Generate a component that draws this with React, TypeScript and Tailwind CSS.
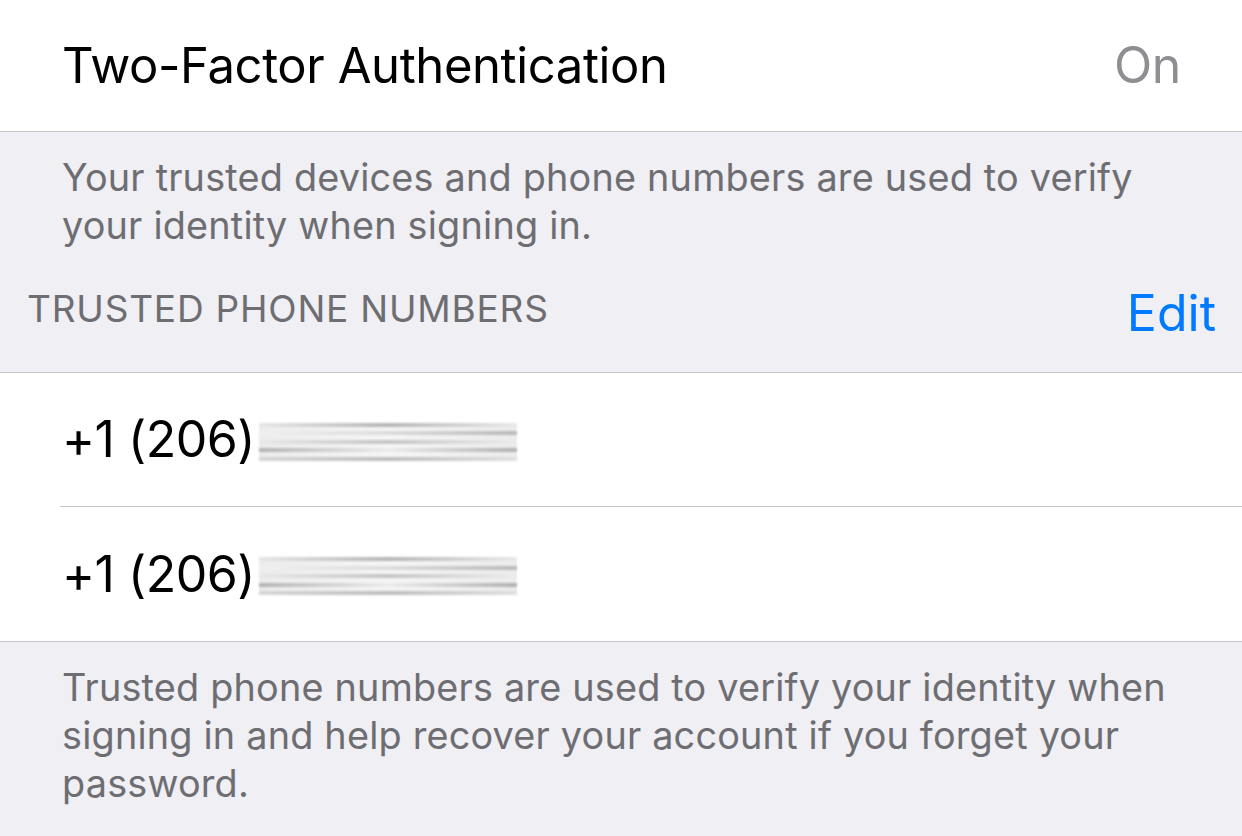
import React from "react";

const Redacted: React.FC = () => (
  <div className="ml-[4px] mt-[4px] flex h-[38px] w-[258px] flex-col justify-between bg-gradient-to-r from-[#ececec] via-[#f6f6f6] to-[#ececec] blur-[1px]">
    <div className="h-[4px] bg-gradient-to-r from-[#e6e6e6] via-[#b5b5b5] to-[#e9e9e9]" />
    <div className="h-[4px] bg-gradient-to-r from-[#f0f0f0] via-[#dcdcdc] to-[#b9b9b9]" />
    <div className="h-[4px] bg-gradient-to-r from-[#e8e8e8] via-[#c4c4c4] to-[#ececec]" />
    <div className="h-[4px] bg-gradient-to-r from-[#b3b3b3] via-[#ececec] to-[#b0b0b0]" />
    <div className="h-[4px] bg-gradient-to-r from-[#d6d6d6] via-[#bdbdbd] to-[#e0e0e0]" />
  </div>
);

const PhoneRow: React.FC<{ last?: boolean }> = ({ last }) => (
  <div className="pl-[60px]">
    <div className={`flex h-[134px] items-center ${last ? "" : "border-b border-[#c8c7cc]"}`}>
      <span className="pl-[2px] text-[50px] tracking-[-0.5px] text-black">+1 (206)</span>
      <Redacted />
    </div>
  </div>
);

export default function App() {
  return (
    <div className="h-[836px] w-[1242px] overflow-hidden bg-[#efeff4] font-['Inter',sans-serif]">
      {/* status row */}
      <div className="flex h-[132px] items-center justify-between border-b border-[#c8c7cc] bg-white pl-[62px] pr-[61px]">
        <span className="text-[49px] tracking-[-0.4px] text-black">Two-Factor Authentication</span>
        <span className="text-[50px] tracking-[-0.4px] text-[#8e8e93]">On</span>
      </div>

      {/* description */}
      <p className="px-[62px] pt-[21px] text-[37.8px] leading-[48px] tracking-[0.2px] text-[#6d6d72]">
        Your trusted devices and phone numbers are used to verify your identity when signing in.
      </p>

      {/* section header */}
      <div className="flex h-[123px] items-center justify-between pl-[27px] pr-[26px]">
        <span className="-mt-[4px] text-[37px] tracking-[0.8px] text-[#6d6d72]">TRUSTED PHONE NUMBERS</span>
        <span className="mt-[6px] text-[50px] text-[#007aff]">Edit</span>
      </div>

      {/* phone numbers */}
      <div className="border-y border-[#c8c7cc] bg-white">
        <PhoneRow />
        <PhoneRow last />
      </div>

      {/* footer */}
      <p className="px-[62px] pt-[21px] text-[37.8px] leading-[48px] tracking-[0.2px] text-[#6d6d72]">
        Trusted phone numbers are used to verify your identity when signing in and help recover your account if you
        forget your password.
      </p>
    </div>
  );
}
